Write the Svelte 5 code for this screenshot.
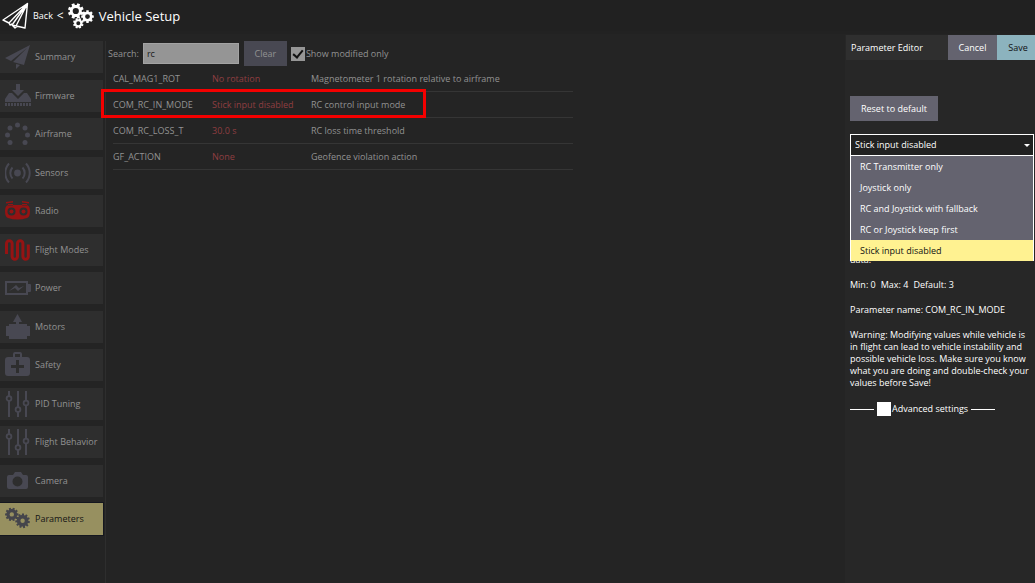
<script>
  const sections = [
    ['Summary', 'plane'], ['Firmware', 'firmware'], ['Airframe', 'airframe'], ['Sensors', 'sensors'],
    ['Radio', 'radio', true], ['Flight Modes', 'modes', true], ['Power', 'power'], ['Motors', 'motors'],
    ['Safety', 'safety'], ['PID Tuning', 'sliders'], ['Flight Behavior', 'sliders'], ['Camera', 'camera'],
    ['Parameters', 'gears']
  ];
  let active = $state('Parameters');
  const params = [
    ['CAL_MAG1_ROT', 'No rotation', 'Magnetometer 1 rotation relative to airframe'],
    ['COM_RC_IN_MODE', 'Stick input disabled', 'RC control input mode'],
    ['COM_RC_LOSS_T', '30.0 s', 'RC loss time threshold'],
    ['GF_ACTION', 'None', 'Geofence violation action']
  ];
  const modes = ['RC Transmitter only', 'Joystick only', 'RC and Joystick with fallback', 'RC or Joystick keep first', 'Stick input disabled'];
  let mode = $state('Stick input disabled');
  let search = $state('rc');
  let modifiedOnly = $state(true);
  let advanced = $state(false);

  function gear(cx, cy, outer, inner, hole, teeth, turn = 0) {
    const pts = [];
    const step = (Math.PI * 2) / teeth;
    for (let i = 0; i < teeth; i++) {
      const a = i * step + turn;
      for (const [o, r] of [[-0.32, inner], [-0.24, outer], [0.24, outer], [0.32, inner]]) {
        pts.push(`${(cx + r * Math.cos(a + o * step)).toFixed(2)} ${(cy + r * Math.sin(a + o * step)).toFixed(2)}`);
      }
    }
    return `M${pts.join('L')}Z M${cx - hole} ${cy}a${hole} ${hole} 0 1 0 ${hole * 2} 0a${hole} ${hole} 0 1 0 ${-hole * 2} 0Z`;
  }
</script>

<div class="app">
  <header>
    <button class="back">
      <svg width="28" height="28" viewBox="0 0 28 28" fill="none" stroke="#fff" stroke-width="1.4" stroke-linejoin="round">
        <path d="M25.500 1.500L1 18l6 3L25.500 1.500L10 23l13 3L25.500 1.500M10 23l3 3 2.500-2M7 21l1 2 2-1M25.500 1.500L14 24" />
      </svg>
      <span>Back</span>
    </button>
    <span class="chevron">&lt;</span>
    <svg width="26" height="26" viewBox="0 0 26 26" fill="#fff" fill-rule="evenodd">
      <path d={gear(7.8, 8, 8, 6, 3.1, 8, 0.39)} />
      <path d={gear(19.5, 13.6, 6.4, 5, 2.4, 8, 0)} />
      <path d={gear(10.3, 20.3, 5.4, 4.2, 2, 8, 0.39)} />
    </svg>
    <h1>Vehicle Setup</h1>
  </header>

  <div class="body">
    <nav aria-label="Vehicle setup sections">
      {#each sections as [name, icon, alert]}
        <button class:alert class:active={active === name} onclick={() => (active = name)}>
          <svg width="26" height="26" viewBox="0 0 26 26" fill="currentColor" fill-rule="evenodd">
            {#if icon === 'plane'}
              <path d="M25 1L0 14l6 3L22 4 8 18l11 3zM11 20v5l4-4z" />
            {:else if icon === 'firmware'}
              <path d="M11 1h4v6h4l-6 6-6-6h4zM4 10h3l6 6 6-6h3l4 6v3H0v-3zM0 20h2v3H0zM3 20h2v3H3zM6 20h2v3H6zM9 20h2v3H9zM12 20h2v3h-2zM15 20h2v3h-2zM18 20h2v3h-2zM21 20h2v3h-2zM24 20h2v3h-2z" />
            {:else if icon === 'airframe'}
              {#each [[12.5, 4], [5, 7], [20, 7], [2.5, 14], [22.5, 14], [5, 21.5], [20, 21.5]] as [x, y]}
                <circle cx={x} cy={y} r="2.5" />
              {/each}
            {:else if icon === 'sensors'}
              <circle cx="12.500" cy="13" r="3.4" />
              <path d="M7.500 7.500a8 8 0 0 0 0 11M17.500 7.500a8 8 0 0 1 0 11M4 3.500a14 14 0 0 0 0 19M21 3.500a14 14 0 0 1 0 19" fill="none" stroke="currentColor" stroke-width="2" />
            {:else if icon === 'radio'}
              <path d="M1 4l7-1v1.6L1 5.6zM24 4l-7-1v1.6l7 1zM3 6h5v1.500H3zM17 6h5v1.500h-5zM3 7h19q3 1 3 6 0 6-3 7-4.500 1.600-9.500 1.600T3 20q-3-1-3-7 0-5 3-6z" />
              <g fill="#2e2e2e"><circle cx="6.500" cy="13.500" r="4" /><circle cx="18.500" cy="13.500" r="4" /></g>
              <circle cx="6.500" cy="13.500" r="2" /><circle cx="18.500" cy="13.500" r="2" />
            {:else if icon === 'modes'}
              <path d="M1.500 17V6.500a2.800 2.800 0 0 1 5.600 0v13a2.700 2.700 0 0 0 5.400 0v-13a2.700 2.700 0 0 1 5.400 0v13a2.700 2.700 0 0 0 5.400 0V7.500" fill="none" stroke="currentColor" stroke-width="3" />
            {:else if icon === 'power'}
              <path d="M0 6h23v3h2q1 0 1 1v6q0 1-1 1h-2v3H0zM2 8v10h19V8z" />
              <path d="M4 16l7-6 3 3 5-2-6 5-3-3z" />
            {:else if icon === 'motors'}
              <path d="M12.500 0l4.500 8h-3v2h8v2h3v10h-3v3H4v-3H1V12h3v-2h7V8H8z" />
            {:else if icon === 'safety'}
              <path d="M8 5V2q0-2 2-2h5q2 0 2 2v3h5q3 0 3 3v13q0 3-3 3H3q-3 0-3-3V8q0-3 3-3zM10 5h5V2h-5zM11 8v5H6v3h5v5h3v-5h5v-3h-5V8z" />
            {:else if icon === 'sliders'}
              <path d="M4 0v5M4 10v16M13 0v16M13 21v5M21 0v9M21 14v12" fill="none" stroke="currentColor" stroke-width="2" />
              <g fill="none" stroke="currentColor" stroke-width="1.800"><circle cx="4" cy="7.500" r="2.400" /><circle cx="13" cy="18.500" r="2.400" /><circle cx="21" cy="12" r="2.400" /></g>
            {:else if icon === 'camera'}
              <path d="M4 7h4l2-3h6l2 3h3q2 0 2 2v10q0 2-2 2H4q-2 0-2-2V9q0-2 2-2zM7.500 13.500a5 5 0 1 0 10 0a5 5 0 1 0-10 0z" />
            {:else}
              <path d={gear(6.8, 8.4, 6.8, 5.4, 2.2, 10)} />
              <path d={gear(17.6, 14.8, 7.4, 5.8, 2.2, 11, 0.2)} />
            {/if}
          </svg>
          <span>{name}</span>
        </button>
      {/each}
    </nav>

    <main>
      <div class="filters">
        <label for="search">Search:</label>
        <input id="search" type="text" bind:value={search} />
        <button onclick={() => (search = '')}>Clear</button>
        <label class="check"><input type="checkbox" bind:checked={modifiedOnly} />Show modified only</label>
      </div>
      <div class="list">
        <table>
          <tbody>
            {#each params as [name, value, about]}
              <tr><td>{name}</td><td class="value">{value}</td><td>{about}</td></tr>
            {/each}
          </tbody>
        </table>
        <div class="marker"></div>
      </div>
    </main>

    <aside>
      <div class="bar">
        <h2>Parameter Editor</h2>
        <button>Cancel</button>
        <button class="save">Save</button>
      </div>
      <div class="editor">
        <button class="reset">Reset to default</button>
        <div class="combo">
          <select aria-label="COM_RC_IN_MODE" bind:value={mode}>
            {#each modes as m}<option>{m}</option>{/each}
          </select>
          <svg class="arrow" width="6" height="4" viewBox="0 0 6 4"><path d="M0 0h6L3 3z" fill="#fff" /></svg>
          <div class="menu">
            {#each modes as m}
              <button class:chosen={m === mode} onclick={() => (mode = m)}>{m}</button>
            {/each}
          </div>
        </div>
        <p class="about">data.</p>
        <p class="range"><span>Min: 0</span><span>Max: 4</span><span>Default: 3</span></p>
        <p>Parameter name: COM_RC_IN_MODE</p>
        <p>Warning: Modifying values while vehicle is in flight can lead to vehicle instability and possible vehicle loss. Make sure you know what you are doing and double-check your values before Save!</p>
        <div class="advanced">
          <label><input type="checkbox" bind:checked={advanced} />Advanced settings</label>
        </div>
      </div>
    </aside>
  </div>
</div>

<style>
  :global(body) { margin: 0; background: #242424; }
  .app, button, input, select { font-family: "Open Sans", "Noto Sans", sans-serif; font-size: 9px; line-height: 12px; }
  .app { display: flex; flex-direction: column; min-height: 100vh; color: #929292; box-sizing: border-box; }
  button { border: 0; padding: 0; border-radius: 0; background: none; color: inherit; white-space: nowrap; }
  svg { display: block; flex: none; }
  h1, h2, p { margin: 0; font-weight: 400; }
  header { display: flex; align-items: center; height: 31px; padding-left: 2px; background: #212121; color: #fff; border-bottom: 3px solid #222; }
  .back { display: flex; align-items: center; gap: 3px; }
  .chevron { margin: 0 4px; font-size: 12px; }
  h1 { margin-left: 5px; font-size: 13px; line-height: 18px; }
  .body { display: flex; flex: 1; }

  nav { display: flex; flex-direction: column; justify-content: space-between; align-self: flex-start; box-sizing: border-box; width: 103px; height: calc(100vh - 89px); margin-top: 7px; }
  nav button { display: flex; align-items: center; gap: 4px; height: 32px; padding-left: 5px; background: #2e2e2e; text-align: left; }
  nav svg { color: #484852; }
  nav .alert svg { color: #951313; }
  nav .active { background: #979060; color: #151515; outline: 1px solid #15171f; }
  nav .active svg { color: #45454b; }

  main { flex: 1; min-width: 0; margin: 7px 0 0 2px; padding-left: 2px; border-left: 1px solid #2e2e2e; }
  .filters { display: flex; align-items: center; height: 25px; }
  .filters #search { width: 96px; height: 21px; box-sizing: border-box; margin: 0 5px 0 4px; padding: 0 3px; border: 1px solid #a3a3a3; background: #959595; color: #1c1c1c; }
  .filters button { width: 43px; height: 25px; margin-right: 4px; background: #484852; }
  label { display: flex; align-items: center; gap: 1px; }
  input[type="checkbox"] { appearance: none; display: grid; width: 14px; height: 14px; margin: 0; background: #969696; }
  input[type="checkbox"]:checked::before { content: ""; width: 4px; height: 8px; margin: 0 0 2px 1px; place-self: center; border: solid #111; border-width: 0 2px 2px 0; transform: rotate(40deg); }
  .list { position: relative; margin-left: 5px; max-width: 460px; }
  table { width: 100%; border-collapse: collapse; table-layout: fixed; }
  td { height: 25px; padding: 0; border-bottom: 1px solid #353535; white-space: nowrap; }
  td:nth-child(-n + 2) { width: 99px; }
  .value { color: #8f3e41; }
  .marker { position: absolute; left: -12px; top: 23px; width: 319px; height: 23px; border: 3px solid #f40000; }

  aside { width: 190px; margin-top: 1px; background: #272727; color: #fff; }
  .bar { display: flex; height: 25px; margin-left: 1px; background: #2f2f2f; }
  h2 { flex: 1; padding-left: 5px; font-size: 9px; line-height: 25px; }
  .bar button { width: 49px; background: #64636f; }
  .bar .save { width: 38px; background: #8cb3be; color: #111; padding-left: 4px; }
  .editor { display: flex; flex-direction: column; align-items: flex-start; gap: 13px; padding: 36px 1px 0 5px; }
  .reset { width: 88px; height: 25px; background: #64636f; }
  .combo { position: relative; align-self: stretch; }
  select { appearance: none; display: block; width: 100%; height: 22px; box-sizing: border-box; padding: 0 4px; border: 1px solid #fff; border-radius: 0; background: #212121; color: #fff; }
  .arrow { position: absolute; right: 4px; top: 10px; }
  .menu { position: absolute; z-index: 1; top: 21px; left: 0; right: 0; display: flex; flex-direction: column; border: 1px solid #fff; border-bottom: 0; background: #64636f; }
  .menu button { height: 21px; padding-left: 9px; text-align: left; }
  .menu .chosen { background: #fff291; color: #111; }
  .about { padding-top: 85px; }
  .range { display: flex; gap: 5px; }
  .advanced { display: flex; align-items: center; gap: 3px; }
  .advanced::before, .advanced::after { content: ""; width: 24px; height: 1px; background: #fff; }
  .advanced input { background: #fff; }
</style>
